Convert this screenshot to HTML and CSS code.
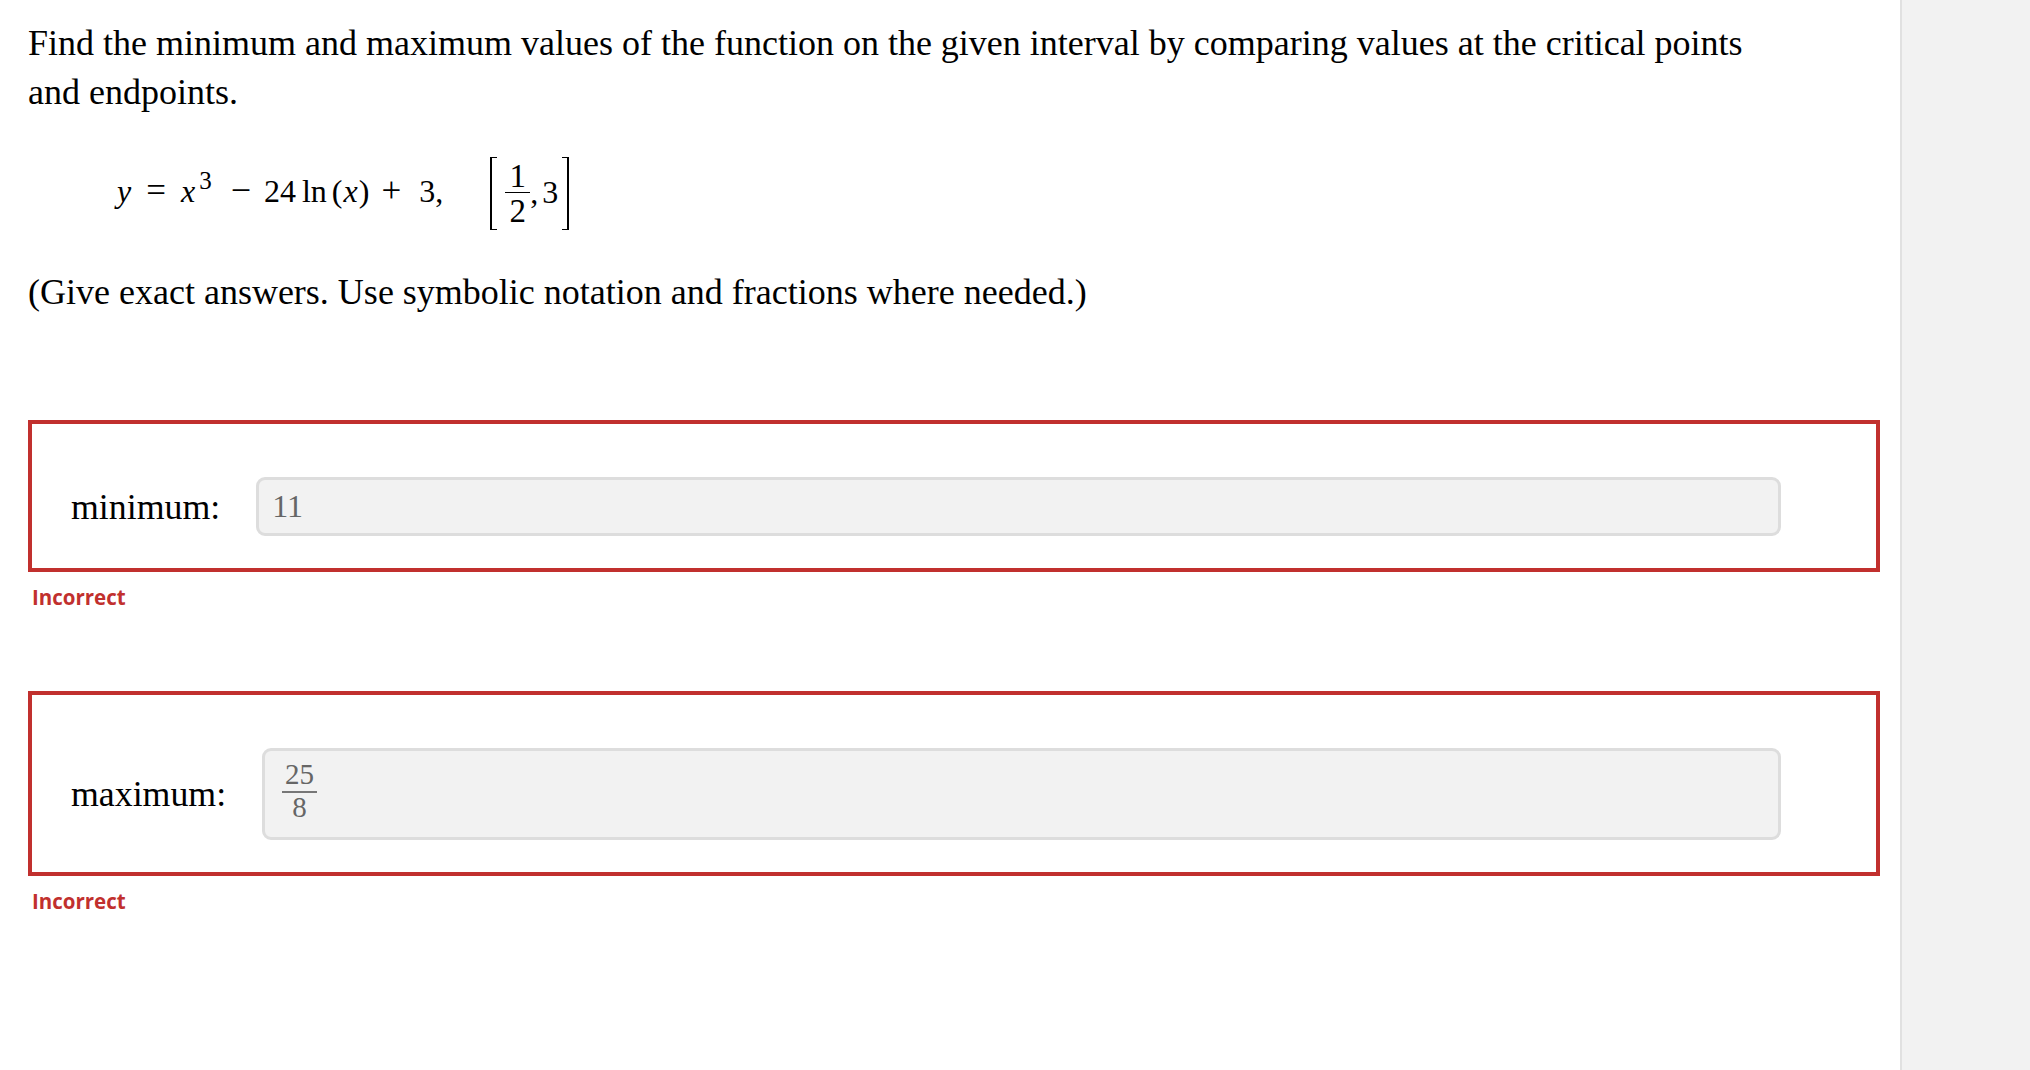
FILE: index.html
```html
<!DOCTYPE html>
<html lang="en">
<head>
<meta charset="utf-8">
<title>Minimum and maximum values</title>
<link rel="stylesheet" href="styles.css">
</head>
<body>
<div class="page">
  <main class="content">
    <p class="prompt">Find the minimum and maximum values of the function on the given interval by comparing values at the critical points and endpoints.</p>

    <div class="equation">
      <span class="math"><span class="mi">y</span><span class="mo rel">=</span><span class="mi">x</span><sup class="sup">3</sup><span class="mo bin">−</span><span class="mn">24</span><span class="fn">ln</span><span class="paren paren-open">(</span><span class="mi">x</span><span class="paren">)</span><span class="mo bin plus">+</span><span class="mn">3,</span></span>
      <span class="interval">
        <span class="bracket bracket-left"></span>
        <span class="frac"><span class="num">1</span><span class="bar"></span><span class="den">2</span></span>
        <span class="interval-end">,<span class="end-val">3</span></span>
        <span class="bracket bracket-right"></span>
      </span>
    </div>

    <p class="note">(Give exact answers. Use symbolic notation and fractions where needed.)</p>

    <div class="answers">
      <section class="answer">
        <div class="answer-box incorrect">
          <span class="answer-label">minimum:</span>
          <div class="answer-input">11</div>
        </div>
        <div class="feedback">Incorrect</div>
      </section>

      <section class="answer">
        <div class="answer-box incorrect">
          <span class="answer-label">maximum:</span>
          <div class="answer-input answer-input-tall">
            <span class="input-frac"><span class="input-num">25</span><span class="input-bar"></span><span class="input-den">8</span></span>
          </div>
        </div>
        <div class="feedback">Incorrect</div>
      </section>
    </div>
  </main>
  <aside class="sidebar"></aside>
</div>
</body>
</html>
```

FILE: styles.css
```css
html, body {
  margin: 0;
  padding: 0;
  background: #ffffff;
}

body {
  font-family: "Liberation Serif", "Times New Roman", serif;
  color: #000;
}

.page {
  display: flex;
  min-height: 100vh;
}

.content {
  flex: 1;
  padding: 19px 20px 0 28px;
  min-width: 0;
}

.sidebar {
  width: 128px;
  flex: 0 0 128px;
  background: #f2f2f2;
  border-left: 2px solid #e1e1e1;
}

.prompt,
.note {
  margin: 0;
  font-size: 36px;
  line-height: 49px;
  max-width: 1750px;
}

/* equation */
.equation {
  display: flex;
  align-items: center;
  height: 73px;
  margin: 40px 0 38px 89px;
  font-size: 32px;
}

.math {
  display: inline-flex;
  align-items: baseline;
  white-space: nowrap;
  line-height: normal;
  margin-top: -7px;
}

.mi {
  font-style: italic;
}

.rel {
  margin: 0 15px;
  font-size: 35px;
}

.bin {
  margin: 0 13px 0 19px;
  font-size: 36px;
}

.plus {
  margin: 0 18px 0 11px;
  font-size: 35px;
}

.sup {
  font-size: 25px;
  margin-left: 4px;
  vertical-align: 0;
  position: relative;
  top: -13px;
}

.fn {
  margin-left: 6px;
}

.paren {
  margin: 0 1px;
}

.paren-open {
  margin-left: 5px;
}

.interval {
  display: inline-flex;
  align-items: center;
  margin-left: 47px;
  height: 73px;
}

.bracket {
  display: block;
  width: 5px;
  height: 71px;
  border-top: 1.5px solid #000;
  border-bottom: 1.5px solid #000;
}

.bracket-left {
  border-left: 2px solid #000;
  margin-right: 8px;
}

.bracket-right {
  border-right: 2px solid #000;
  margin-left: 4px;
}

.frac {
  display: inline-flex;
  flex-direction: column;
  align-items: center;
  width: 25px;
  font-size: 33px;
}

.num,
.den {
  display: block;
  line-height: 32px;
  height: 32px;
}

.bar {
  display: block;
  width: 100%;
  height: 1.5px;
  background: #000;
}

.den {
  margin-top: 2px;
}

.interval-end {
  line-height: normal;
  margin-top: -2px;
  white-space: nowrap;
}

.end-val {
  margin-left: 4px;
}

/* answers */
.answers {
  margin-top: 103px;
  max-width: 1852px;
}

.answer + .answer {
  margin-top: 80px;
}

.answer-box {
  display: flex;
  align-items: center;
  padding: 53px 95px 32px 39px;
}

.answer-box.incorrect {
  border: 4px solid #c1302e;
}

.answer-label {
  font-size: 35.8px;
  line-height: normal;
  margin-right: 36px;
  white-space: nowrap;
}

.answer-input {
  flex: 1;
  display: flex;
  align-items: center;
  box-sizing: border-box;
  height: 59px;
  padding-left: 13px;
  background: #f2f2f2;
  border: 3px solid #dddddd;
  border-radius: 9px;
  font-size: 32px;
  color: #666666;
}

.answer-input-tall {
  height: 92px;
  padding-left: 17px;
  padding-bottom: 6px;
}

.input-frac {
  display: inline-flex;
  flex-direction: column;
  align-items: center;
  padding: 0;
  font-size: 29px;
}

.input-num,
.input-den {
  display: block;
  line-height: 29px;
  height: 29px;
  padding: 0 3px;
}

.input-num {
  margin-bottom: 2px;
}

.input-bar {
  display: block;
  width: 100%;
  height: 1.5px;
  background: #777777;
}

.feedback {
  margin-top: 11px;
  padding-left: 4px;
  font-family: "Open Sans", "Noto Sans", sans-serif;
  font-weight: 700;
  font-size: 20.5px;
  color: #c1302e;
}
```
